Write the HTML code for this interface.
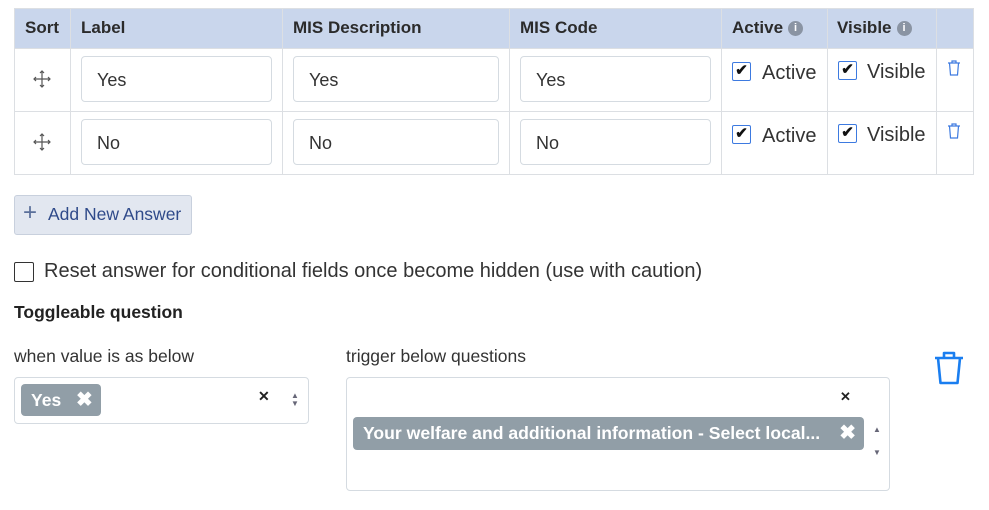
<!DOCTYPE html><html><head><style>
body{margin:0;width:989px;height:510px;background:#fff;font-family:"Liberation Sans",sans-serif;color:#333;position:relative;overflow:hidden}
.a{position:absolute}
.hd{background:#c9d6ec;top:8px;height:40px}
.th{position:absolute;top:8px;height:40px;line-height:40px;font-weight:bold;font-size:17px;color:#2b2b2b}
.vl{position:absolute;width:1px;background:#dcdfe3}
.hl{position:absolute;height:1px;background:#dcdfe3;left:14px;width:960px}
.in{position:absolute;border:1px solid #d5dbe1;border-radius:4px;height:46px;line-height:46px;padding-left:15px;box-sizing:border-box;font-size:18px;color:#333}
.cb{position:absolute;width:19px;height:19px;border:1.5px solid #3d7ae0;border-radius:2px;box-sizing:border-box;font-size:15px;line-height:16px;text-align:center;color:#111;font-weight:bold}
.ct{position:absolute;font-size:20px;color:#333}
.info{display:inline-block;width:15px;height:15px;border-radius:50%;background:#8a94a3;color:#fff;font-size:11px;line-height:15px;text-align:center;vertical-align:2px;margin-left:5px}
</style></head><body>
<div class="a hd" style="left:14px;width:960px"></div>
<div class="th" style="left:25px">Sort</div>
<div class="th" style="left:81px">Label</div>
<div class="th" style="left:293px">MIS Description</div>
<div class="th" style="left:520px">MIS Code</div>
<div class="th" style="left:732px">Active<span class="info">i</span></div>
<div class="th" style="left:837px">Visible<span class="info">i</span></div>
<div class="vl" style="left:14px;top:8px;height:167px"></div>
<div class="vl" style="left:70px;top:8px;height:167px"></div>
<div class="vl" style="left:282px;top:8px;height:167px"></div>
<div class="vl" style="left:509px;top:8px;height:167px"></div>
<div class="vl" style="left:721px;top:8px;height:167px"></div>
<div class="vl" style="left:827px;top:8px;height:167px"></div>
<div class="vl" style="left:936px;top:8px;height:167px"></div>
<div class="vl" style="left:973px;top:8px;height:167px"></div>
<div class="hl" style="top:8px"></div>
<div class="hl" style="top:48px"></div>
<div class="hl" style="top:111px"></div>
<div class="hl" style="top:174px"></div>
<svg class="a" style="left:33px;top:70px" width="18" height="18" viewBox="0 0 18 18" fill="none" stroke="#555" stroke-width="1.2"><path d="M9 1v16M1 9h16M7 3l2-2 2 2M7 15l2 2 2-2M3 7l-2 2 2 2M15 7l2 2-2 2"/></svg>
<svg class="a" style="left:33px;top:133px" width="18" height="18" viewBox="0 0 18 18" fill="none" stroke="#555" stroke-width="1.2"><path d="M9 1v16M1 9h16M7 3l2-2 2 2M7 15l2 2 2-2M3 7l-2 2 2 2M15 7l2 2-2 2"/></svg>
<div class="in" style="left:81px;top:56px;width:191px">Yes</div>
<div class="in" style="left:293px;top:56px;width:206px">Yes</div>
<div class="in" style="left:520px;top:56px;width:191px">Yes</div>
<div class="in" style="left:81px;top:119px;width:191px">No</div>
<div class="in" style="left:293px;top:119px;width:206px">No</div>
<div class="in" style="left:520px;top:119px;width:191px">No</div>
<div class="cb" style="left:732px;top:62px">✔</div><div class="ct" style="left:762px;top:62px">Active</div>
<div class="cb" style="left:838px;top:61px">✔</div><div class="ct" style="left:867px;top:61px">Visible</div>
<div class="cb" style="left:732px;top:125px">✔</div><div class="ct" style="left:762px;top:125px">Active</div>
<div class="cb" style="left:838px;top:124px">✔</div><div class="ct" style="left:867px;top:124px">Visible</div>
<svg class="a" style="left:946px;top:59px" width="16" height="18" viewBox="0 0 16 18" fill="none" stroke="#3d7ae0" stroke-width="1.2"><path d="M2 4h12M6 4V2h4v2M3.5 4l1 12h7l1-12"/></svg>
<svg class="a" style="left:946px;top:122px" width="16" height="18" viewBox="0 0 16 18" fill="none" stroke="#3d7ae0" stroke-width="1.2"><path d="M2 4h12M6 4V2h4v2M3.5 4l1 12h7l1-12"/></svg>
<div class="a" style="left:14px;top:195px;width:178px;height:40px;background:#e2e7f0;border:1px solid #c8d0dd;border-radius:3px;box-sizing:border-box"></div>
<div class="a" style="left:23px;top:200px;font-size:24px;color:#5a6f9a;line-height:26px">+</div>
<div class="a" style="left:48px;top:204px;font-size:17.5px;color:#2f4a8a">Add New Answer</div>
<div class="a" style="left:14px;top:262px;width:20px;height:20px;border:1.5px solid #333;border-radius:2px;box-sizing:border-box"></div>
<div class="a" style="left:44px;top:260px;font-size:20px;color:#333">Reset answer for conditional fields once become hidden (use with caution)</div>
<div class="a" style="left:14px;top:302px;font-size:17.5px;font-weight:bold;color:#222">Toggleable question</div>
<div class="a" style="left:14px;top:346px;font-size:17.5px;color:#333">when value is as below</div>
<div class="a" style="left:346px;top:346px;font-size:17.5px;color:#333">trigger below questions</div>
<div class="a" style="left:14px;top:377px;width:295px;height:47px;border:1px solid #d5dbe1;border-radius:4px;box-sizing:border-box"></div>
<div class="a" style="left:21px;top:384px;width:80px;height:32px;background:#919ea7;border-radius:4px;color:#fff;font-weight:bold;font-size:17.5px;line-height:32px;padding-left:10px;box-sizing:border-box">Yes <span style="margin-left:10px;font-size:20px">✖</span></div>
<div class="a" style="left:258px;top:388px;font-size:14px;font-weight:bold;color:#222">✕</div>
<div class="a" style="left:291px;top:392px;font-size:8px;color:#667;line-height:8px">▲<br>▼</div>
<div class="a" style="left:346px;top:377px;width:544px;height:114px;border:1px solid #d5dbe1;border-radius:4px;box-sizing:border-box"></div>
<div class="a" style="left:840px;top:389px;font-size:13px;font-weight:bold;color:#222">✕</div>
<div class="a" style="left:353px;top:417px;width:511px;height:33px;background:#919ea7;border-radius:4px;color:#fff;font-weight:bold;font-size:17.6px;line-height:33px;padding-left:10px;box-sizing:border-box;white-space:nowrap">Your welfare and additional information - Select local...<span style="position:absolute;right:8px;font-size:20px">✖</span></div>
<div class="a" style="left:873px;top:418px;font-size:8px;color:#667;line-height:23px">▲<br>▼</div>
<svg class="a" style="left:932px;top:350px" width="34" height="36" viewBox="0 0 34 36" fill="none" stroke="#1a7ef0" stroke-width="2.6" stroke-linejoin="round"><path d="M3 8h28M12 8V3h10v5M6 8l2.5 25h17L28 8"/></svg>
</body></html>
